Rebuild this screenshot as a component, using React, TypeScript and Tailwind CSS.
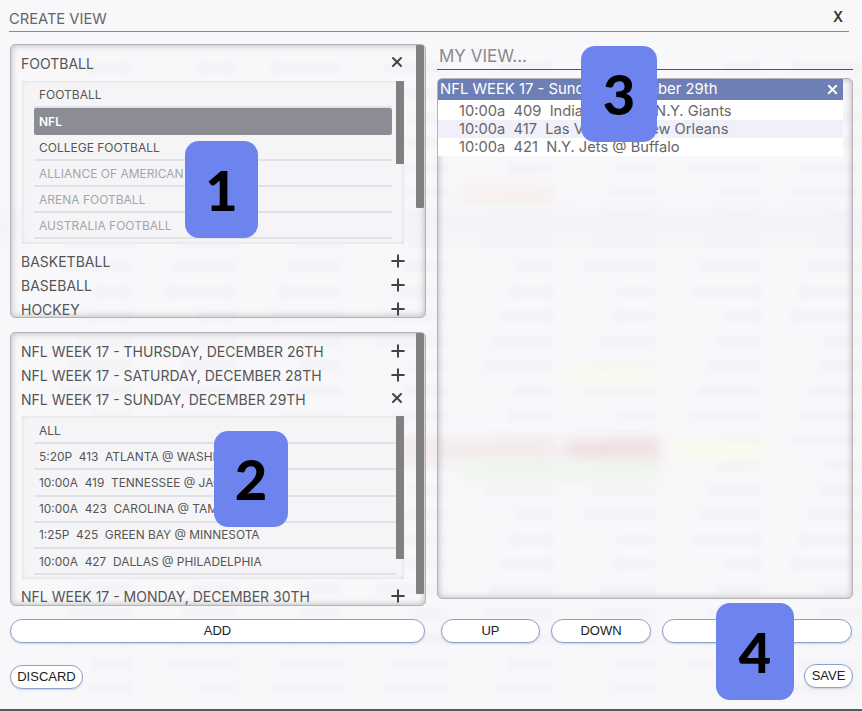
import React from 'react';
import { Plus, X } from 'lucide-react';

const sportItems = [
  { label: 'FOOTBALL', tone: 'normal' },
  { label: 'NFL', tone: 'selected' },
  { label: 'COLLEGE FOOTBALL', tone: 'normal' },
  { label: 'ALLIANCE OF AMERICAN FOOTBALL', tone: 'muted' },
  { label: 'ARENA FOOTBALL', tone: 'muted' },
  { label: 'AUSTRALIA FOOTBALL', tone: 'muted' },
];

const gameItems = [
  'ALL',
  '5:20P  413  ATLANTA @ WASHINGTON',
  '10:00A  419  TENNESSEE @ JACKSONVILLE',
  '10:00A  423  CAROLINA @ TAMPA BAY',
  '1:25P  425  GREEN BAY @ MINNESOTA',
  '10:00A  427  DALLAS @ PHILADELPHIA',
];

const viewRows = [
  { text: '10:00a  409  Indianapolis @ N.Y. Giants', bg: 'bg-white', height: 'h-[20px]' },
  { text: '10:00a  417  Las Vegas @ New Orleans', bg: 'bg-[#f0f0fb]', height: 'h-[18px]' },
  { text: '10:00a  421  N.Y. Jets @ Buffalo', bg: 'bg-white', height: 'h-[18px]' },
];

const smudgeWidths = ['w-[44px]', 'w-[62px]', 'w-[38px]', 'w-[54px]', 'w-[70px]'];
const smudgeRows = Array.from({ length: 26 }, (_, i) => i);
const smudgeCols = [0, 1, 2, 3, 4, 5, 6, 7];

function Heading({ label, open }: { label: string; open?: boolean }) {
  return (
    <div className="flex h-6 items-center justify-between pl-[10px] pr-[8px] text-[14px] text-[#555] whitespace-nowrap">
      <span>{label}</span>
      {open ? (
        <X className="mb-[2px] mr-[3px] h-4 w-4 text-[#444]" strokeWidth={3} />
      ) : (
        <Plus className="h-5 w-5 text-[#444]" strokeWidth={2.4} />
      )}
    </div>
  );
}

function InnerList({ children, thumb, rowGutter, top }: { children: React.ReactNode; thumb: string; rowGutter: string; top: string }) {
  return (
    <div className="ml-[11px] mr-[12px] flex h-[163px] bg-[#f5f5f7] shadow-[inset_0_0_4px_rgba(0,0,0,0.12)]">
      <div className={`${rowGutter} ${top} min-w-0 flex-1 overflow-hidden pl-[12px]`}>{children}</div>
      <div className={`${thumb} w-2 shrink-0 rounded-[1px] bg-[#808080]`} />
    </div>
  );
}

function Row({ label, tone = 'normal', size }: { label: string; tone?: string; size: string }) {
  if (tone === 'selected') {
    return (
      <div className="flex h-[27px] items-center rounded-[2px] bg-[#8c8c94] pl-[5px] text-[12px] font-semibold text-white">
        {label}
      </div>
    );
  }
  return (
    <div
      className={`${size} flex items-center border-b-2 border-[#e2e2e6] pl-[5px] pt-[1px] whitespace-pre ${
        tone === 'muted' ? 'text-[#a5a5a8]' : 'text-[#555]'
      }`}
    >
      {label}
    </div>
  );
}

function Panel({ children, thumb }: { children: React.ReactNode; thumb: string }) {
  return (
    <div className="flex h-[274px] overflow-hidden rounded-[5px] border border-[#b4b4b8] shadow-[inset_0_0_7px_rgba(0,0,0,0.28)]">
      <div className="min-w-0 flex-1 overflow-hidden">{children}</div>
      <div className={`${thumb} mr-[1px] w-2 shrink-0 rounded-[1px] bg-[#808080]`} />
    </div>
  );
}

function Pill({ label, className }: { label: string; className: string }) {
  return (
    <button
      className={`${className} flex h-6 items-center justify-center rounded-full border border-[#8f9fd0] bg-white font-['Liberation_Sans',sans-serif] text-[13px] text-[#222] shadow-[0_1px_2px_rgba(0,0,0,0.15)]`}
    >
      {label}
    </button>
  );
}

function Badge({ n, className }: { n: number; className: string }) {
  return (
    <div
      className={`${className} absolute flex items-center justify-center rounded-[14px] bg-[#6d84ef] font-['Lato',sans-serif] text-[56px] font-black text-black`}
    >
      {n}
    </div>
  );
}

export default function App() {
  return (
    <div className="relative h-[711px] w-[862px] overflow-hidden border-b-2 border-[#555a66] bg-[#f8f8fb] font-['Inter',sans-serif]">
      {/* Blurred page behind the dialog */}
      <div className="absolute inset-x-0 top-[56px] flex flex-col">
        {smudgeRows.map((r) => (
          <div key={r} className="grid h-[24.8px] grid-cols-[132px_105px_105px_105px_105px_103px_105px_102px] items-center">
            {smudgeCols.map((c) => (
              <div key={c} className={`${smudgeWidths[(r * 3 + c * 2) % 5]} h-[8px] justify-self-end bg-[#f2f2f6] blur-[3px]`} />
            ))}
          </div>
        ))}
      </div>
      <div className="absolute left-[460px] top-[186px] h-[18px] w-[95px] bg-[#f8efec] blur-sm" />
      <div className="absolute left-0 top-[212px] h-[26px] w-[862px] bg-[#f2f3f8] blur-sm" />
      <div className="absolute left-[565px] top-[366px] h-[16px] w-[95px] bg-[#f9faec] blur-sm" />
      <div className="absolute left-[355px] top-[441px] h-[18px] w-[200px] bg-[#f2e6e7] blur-sm" />
      <div className="absolute left-[565px] top-[441px] h-[18px] w-[95px] bg-[#ecdadc] blur-sm" />
      <div className="absolute left-[670px] top-[441px] h-[18px] w-[95px] bg-[#f9faec] blur-sm" />
      <div className="absolute left-[460px] top-[464px] h-[16px] w-[200px] bg-[#edf6ea] blur-sm" />

      <div className="relative">
        {/* Title bar */}
        <div className="ml-[9px] mr-[13px] flex h-[32px] items-start justify-between border-b border-[#8a8a8e] pt-[11px] text-[14.7px] leading-[17px] text-[#666]">
          <span>CREATE VIEW</span>
          <span className="mr-[6px] mt-[-3px] text-[14px] font-semibold text-[#333]">X</span>
        </div>

        <div className="mt-[12px] flex gap-[11px] pl-[10px] pr-[9px]">
          {/* Left column */}
          <div className="flex w-[416px] flex-col gap-[14px]">
            <Panel thumb="h-[163px]">
              <div className="h-[36px] pt-[6px]">
                <Heading label="FOOTBALL" open />
              </div>
              <InnerList thumb="h-[83px]" rowGutter="pr-[4px]" top="pt-[1px]">
                {sportItems.map((item) => (
                  <Row key={item.label} label={item.label} tone={item.tone} size="h-[26px] text-[12px]" />
                ))}
              </InnerList>
              <div className="pt-[5px]">
                <Heading label="BASKETBALL" />
                <Heading label="BASEBALL" />
                <Heading label="HOCKEY" />
              </div>
            </Panel>
            <Panel thumb="h-[261px]">
              <div className="pt-[6px]">
                <Heading label="NFL WEEK 17 - THURSDAY, DECEMBER 26TH" />
                <Heading label="NFL WEEK 17 - SATURDAY, DECEMBER 28TH" />
                <Heading label="NFL WEEK 17 - SUNDAY, DECEMBER 29TH" open />
              </div>
              <div className="pt-[5px]">
                <InnerList thumb="h-[143px]" rowGutter="pr-0" top="pt-[2px]">
                  {gameItems.map((item) => (
                    <Row key={item} label={item} size="h-[26.2px] text-[11.9px]" />
                  ))}
                </InnerList>
              </div>
              <div className="pt-[5px]">
                <Heading label="NFL WEEK 17 - MONDAY, DECEMBER 30TH" />
              </div>
            </Panel>
          </div>

          {/* Right column */}
          <div className="flex w-[416px] flex-col">
            <div className="h-[26px] border-b border-[#55555a] pl-[2px] text-[17px] leading-[25px] text-[#8a8a8e]">
              MY VIEW...
            </div>
            <div className="mt-[8px] h-[521px] overflow-hidden rounded-[5px] border border-[#b4b4b8] shadow-[inset_0_0_7px_rgba(0,0,0,0.28)]">
              <div className="mr-[9px]">
                <div className="flex h-[21px] items-center justify-between bg-[#6e7fb5] pl-[2px] pr-[3px] text-[14.8px] text-white">
                  <span>NFL WEEK 17 - Sunday, December 29th</span>
                  <X className="h-[15px] w-[15px]" strokeWidth={3} />
                </div>
                {viewRows.map((row) => (
                  <div key={row.text} className={`${row.bg} ${row.height} flex items-end whitespace-pre pl-[21px] text-[14.7px] leading-[18px] text-[#666]`}>
                    {row.text}
                  </div>
                ))}
              </div>
            </div>
          </div>
        </div>

        {/* Buttons */}
        <div className="mt-[13px] flex pl-[10px]">
          <Pill label="ADD" className="w-[415px]" />
          <div className="ml-[16px] flex gap-[11px]">
            <Pill label="UP" className="w-[99px]" />
            <Pill label="DOWN" className="w-[100px]" />
            <Pill label="" className="w-[190px]" />
          </div>
        </div>
        <div className="mt-[22px] flex items-start justify-between pl-[10px] pr-[9px]">
          <Pill label="DISCARD" className="w-[73px]" />
          <Pill label="SAVE" className="mt-[-1px] w-[49px]" />
        </div>
      </div>

      <Badge n={1} className="left-[185px] top-[141px] h-[97px] w-[73px]" />
      <Badge n={2} className="left-[214px] top-[431px] h-[96px] w-[74px]" />
      <Badge n={3} className="left-[581px] top-[46px] h-[96px] w-[76px]" />
      <Badge n={4} className="left-[716px] top-[603px] h-[97px] w-[78px]" />
    </div>
  );
}
